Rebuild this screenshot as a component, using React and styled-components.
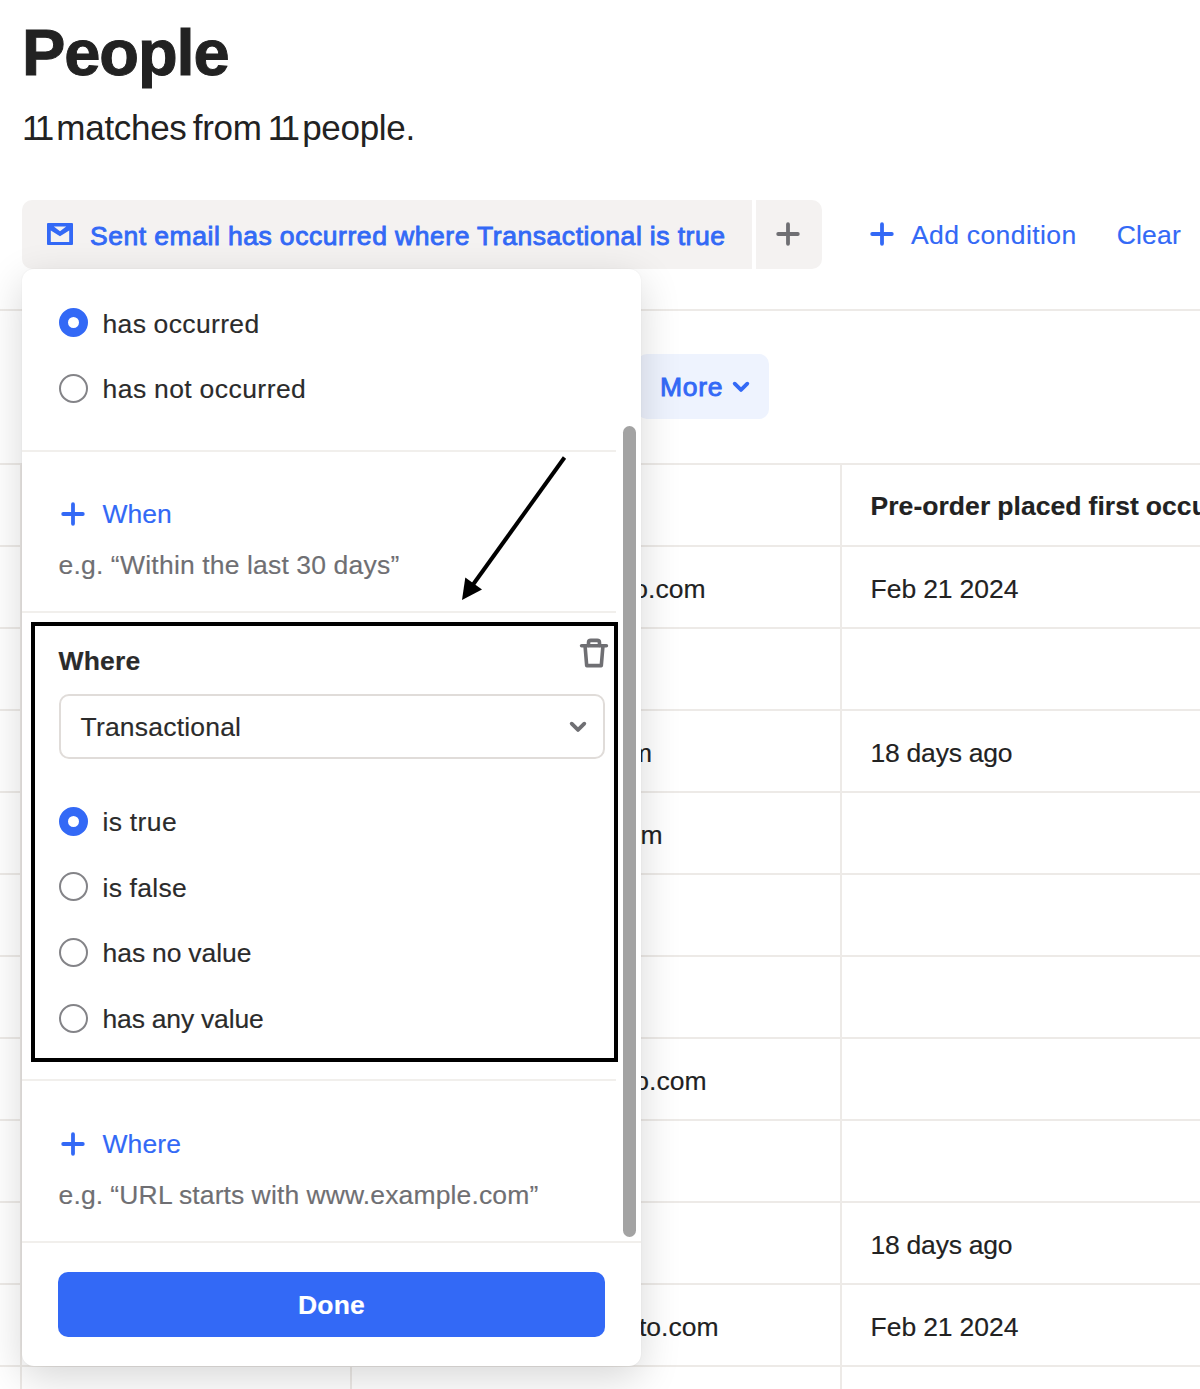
import React from 'react';
import styled, { createGlobalStyle } from 'styled-components';

const blue = '#3369f6';
const ink = '#222222';
const grey = '#6f6f73';
const line = '#edeae7';

const GlobalStyle = createGlobalStyle`
  *, *::before, *::after { box-sizing: border-box; }
  body {
    margin: 0;
    background: #fff;
    color: ${ink};
    font-family: "Liberation Sans", Arial, sans-serif;
    font-size: 26.5px;
    line-height: 30px;
  }
`;

const Page = styled.main`
  position: relative;
  width: 1200px;
  height: 1389px;
  overflow: hidden;
  display: flex;
  flex-direction: column;
`;

const Text = styled.span`
  display: block;
  white-space: nowrap;
  letter-spacing: ${(p) => p.$ls ?? 0.25}px;
  word-spacing: -0.4px;
  color: ${(p) => p.$color || 'inherit'};
  font-weight: ${(p) => (p.$bold ? 700 : 400)};
  -webkit-text-stroke: ${(p) => (p.$medium ? '0.9px currentColor' : '0.15px currentColor')};
  padding-top: ${(p) => p.$drop || 0}px;
`;

const Header = styled.header`
  height: 199px;
  padding: 16px 0 0 22px;
  flex: none;
`;

const Title = styled.h1`
  margin: 0;
  font-size: 65px;
  line-height: 74px;
  font-weight: 700;
  letter-spacing: -1.1px;
  -webkit-text-stroke: 1px currentColor;
`;

const Subtitle = styled.p`
  margin: 18px 0 0;
  font-size: 35px;
  line-height: 40px;
  letter-spacing: -0.3px;
  word-spacing: -3.2px;
  white-space: nowrap;
`;

const Count = styled.span`
  letter-spacing: -4.1px;
`;

const FilterBar = styled.section`
  flex: none;
  height: 112px;
  padding-left: 22px;
  display: flex;
  align-items: flex-start;
  border-bottom: 2px solid ${line};
`;

const Condition = styled.button`
  width: 730px;
  height: 69px;
  margin-top: 0.5px;
  padding: 0 0 0 25px;
  border: 0;
  border-radius: 10px 0 0 10px;
  background: #f4f2f1;
  font: inherit;
  color: ${blue};
  display: flex;
  align-items: center;
  gap: 17px;
`;

const AddGroup = styled.button`
  width: 66px;
  height: 69px;
  margin: 0.5px 0 0 4px;
  padding: 0 2px 0 0;
  border: 0;
  border-radius: 0 10px 10px 0;
  background: #f4f2f1;
  color: ${grey};
  display: flex;
  align-items: center;
  justify-content: center;
`;

const LinkButton = styled.button`
  height: 70px;
  margin-left: ${(p) => p.$left}px;
  padding: 0;
  border: 0;
  background: none;
  font: inherit;
  color: ${blue};
  display: flex;
  align-items: center;
  gap: 17px;
`;

const Toolbar = styled.section`
  flex: none;
  height: 152px;
  padding: 43px 0 0 637px;
`;

const MoreButton = styled.button`
  width: 132px;
  height: 65px;
  padding: 0 0 0 23px;
  border: 0;
  border-radius: 10px;
  background: #eef3fe;
  font: inherit;
  color: ${blue};
  display: flex;
  align-items: center;
  gap: 9px;
`;

const Table = styled.div`
  flex: none;
  border-top: 2px solid ${line};
`;

const Row = styled.div`
  height: 82px;
  display: grid;
  grid-template-columns: 22px 330px 490px 400px;
  border-bottom: 2px solid ${line};
`;

const Cell = styled.div`
  display: flex;
  align-items: center;
  overflow: hidden;
  border-right: 2px solid ${line};
  padding-left: 28.5px;
`;

const Gutter = styled(Cell)`
  padding: 0;
`;

const EmailCell = styled(Cell)`
  justify-content: flex-end;
  padding: 0 ${(p) => p.$end || 0}px 0 0;
`;

const Popover = styled.aside`
  position: absolute;
  left: 22px;
  top: 269px;
  width: 619px;
  height: 1097px;
  border-radius: 12px;
  background: #fff;
  color: #2b2b2b;
  box-shadow: 0 12px 40px rgba(0, 0, 0, 0.16), 0 0 2px rgba(0, 0, 0, 0.06);
  display: flex;
  flex-direction: column;
`;

const ScrollArea = styled.div`
  height: 972px;
  display: flex;
  justify-content: space-between;
`;

const ScrollContent = styled.div`
  width: 594px;
`;

const Scrollbar = styled.div`
  width: 13px;
  height: 811px;
  margin: 157px 5px 0 0;
  border-radius: 7px;
  background: #a3a3a3;
`;

const Section = styled.div`
  height: ${(p) => p.$h}px;
  padding: ${(p) => p.$top}px 0 0 36.5px;
  border-bottom: ${(p) => (p.$last ? '0' : '2px')} solid #f1efec;
`;

const RadioRow = styled.label`
  height: 65.6px;
  display: flex;
  align-items: center;
  gap: 15px;
`;

const Radio = styled.span`
  width: 29px;
  height: 29px;
  border-radius: 50%;
  background: #fff;
  border: ${(p) => (p.$on ? `9px solid ${blue}` : '2px solid #848488')};
`;

const AddRow = styled.div`
  height: 40px;
  padding-left: 2.5px;
  color: ${blue};
  display: flex;
  align-items: center;
  gap: 17.5px;
`;

const Hint = styled.div`
  margin-top: 16px;
  color: ${grey};
`;

const WhereHeader = styled.div`
  height: 57px;
  width: 550px;
  display: flex;
  justify-content: space-between;
`;

const Select = styled.div`
  width: 546px;
  height: 65px;
  padding: 0 16px 0 20px;
  border: 2px solid #e0dcd9;
  border-radius: 10px;
  display: flex;
  align-items: center;
  justify-content: space-between;
`;

const WhereRadios = styled.div`
  margin-top: 29.5px;
`;

const Footer = styled.div`
  height: 125px;
  padding: 29px 36px 0;
  border-top: 2px solid #f1efec;
`;

const DoneButton = styled.button`
  width: 547px;
  height: 65px;
  padding: 0;
  border: 0;
  border-radius: 10px;
  background: ${blue};
  color: #fff;
  font: inherit;
  display: flex;
  align-items: center;
  justify-content: center;
`;

const Highlight = styled.div`
  position: absolute;
  left: 31px;
  top: 622px;
  width: 587px;
  height: 440px;
  border: 4px solid #000;
`;

const ArrowSvg = styled.svg`
  position: absolute;
  left: 450px;
  top: 445px;
`;

const Plus = () => (
  <svg width="24" height="24" viewBox="0 0 24 24" fill="none" stroke="currentColor" strokeWidth="3.8" strokeLinecap="round">
    <path d="M12 2.2v19.6M2.2 12h19.6" />
  </svg>
);

const Chevron = ({ color = 'currentColor' }) => (
  <svg width="18" height="12" viewBox="0 0 18 12" fill="none" stroke={color} strokeWidth="3.8" strokeLinecap="round" strokeLinejoin="round">
    <path d="M2.7 2.7L9 8.9l6.3-6.2" />
  </svg>
);

const Envelope = () => (
  <svg width="26" height="22" viewBox="0 0 26 22" fill="currentColor" fillRule="evenodd">
    <path d="M1 0h24q1 0 1 1v20q0 1-1 1H1q-1 0-1-1V1q0-1 1-1ZM6.8 3.6L13 8.3l6.2-4.7ZM3.8 7.4V18.9H22.2V7.4L13 13.2Z" />
  </svg>
);

const Trash = () => (
  <svg width="30" height="31" viewBox="0 0 30 31" fill="none" stroke={grey} strokeWidth="3.6" strokeLinecap="round" strokeLinejoin="round">
    <path d="M2.6 8.8h24.8" />
    <path d="M9.5 8.5V5.7q0-2.3 2.3-2.3h6.4q2.3 0 2.3 2.3v2.8" />
    <path d="M6.1 9.3l1.6 19.3h14.6l1.6-19.3" />
  </svg>
);

const Option = ({ on, ls, drop = 2, children }) => (
  <RadioRow>
    <Radio $on={on} />
    <Text $ls={ls} $drop={drop}>{children}</Text>
  </RadioRow>
);

const rows = [
  { email: 'o.com', end: 134.5, date: 'Feb 21 2024', ls: 0 },
  {},
  { email: 'm', end: 188, date: '18 days ago', ls: -0.15 },
  { email: 'm', end: 177.5 },
  {},
  {},
  { email: 'o.com', end: 133.5 },
  {},
  { date: '18 days ago', ls: -0.15 },
  { email: 'to.com', end: 121.5, date: 'Feb 21 2024', ls: 0 },
  {},
];

export default function App() {
  return (
    <Page>
      <GlobalStyle />
      <Header>
        <Title>People</Title>
        <Subtitle><Count>11</Count> matches from <Count>11</Count> people.</Subtitle>
      </Header>
      <FilterBar>
        <Condition>
          <Envelope />
          <Text $medium $ls={0.56} $drop={4}>Sent email has occurred where Transactional is true</Text>
        </Condition>
        <AddGroup><Plus /></AddGroup>
        <LinkButton $left={48}>
          <Plus />
          <Text $ls={0.42} $drop={2}>Add condition</Text>
        </LinkButton>
        <LinkButton $left={40}>
          <Text $ls={0.2} $drop={2}>Clear</Text>
        </LinkButton>
      </FilterBar>
      <Toolbar>
        <MoreButton>
          <Text $medium $ls={0.7} $drop={1}>More</Text>
          <Chevron />
        </MoreButton>
      </Toolbar>
      <Table>
        <Row>
          <Gutter />
          <Cell />
          <Cell />
          <Cell><Text $bold $ls={0.05} $drop={1}>Pre-order placed first occu</Text></Cell>
        </Row>
        {rows.map((row, i) => (
          <Row key={i}>
            <Gutter />
            <Cell />
            <EmailCell $end={row.end}>{row.email && <Text $ls={0} $drop={3}>{row.email}</Text>}</EmailCell>
            <Cell>{row.date && <Text $ls={row.ls} $drop={3}>{row.date}</Text>}</Cell>
          </Row>
        ))}
      </Table>

      <Popover>
        <ScrollArea>
          <ScrollContent>
            <Section $h={183} $top={21}>
              <Option on ls={0.35}>has occurred</Option>
              <Option ls={0.45}>has not occurred</Option>
            </Section>
            <Section $h={161} $top={42}>
              <AddRow><Plus /><Text $ls={0}>When</Text></AddRow>
              <Hint><Text $ls={0.24}>e.g. “Within the last 30 days”</Text></Hint>
            </Section>
            <Section $h={468} $top={24}>
              <WhereHeader>
                <Text $bold $ls={0.2} $drop={9}>Where</Text>
                <Trash />
              </WhereHeader>
              <Select>
                <Text $ls={0.2}>Transactional</Text>
                <Chevron color={grey} />
              </Select>
              <WhereRadios>
                <Option on ls={0.4}>is true</Option>
                <Option ls={0.3}>is false</Option>
                <Option ls={-0.05}>has no value</Option>
                <Option ls={-0.12}>has any value</Option>
              </WhereRadios>
            </Section>
            <Section $h={160} $top={43} $last>
              <AddRow><Plus /><Text $ls={0.1}>Where</Text></AddRow>
              <Hint><Text $ls={0.14}>e.g. “URL starts with www.example.com”</Text></Hint>
            </Section>
          </ScrollContent>
          <Scrollbar />
        </ScrollArea>
        <Footer>
          <DoneButton><Text $bold $ls={0.2} $drop={1}>Done</Text></DoneButton>
        </Footer>
      </Popover>

      <Highlight />
      <ArrowSvg width="130" height="165" viewBox="0 0 130 165">
        <path d="M114.5 12.5L22 141" stroke="#000" strokeWidth="4" fill="none" />
        <path d="M12 155L15.3 132.5L32 144.5Z" fill="#000" />
      </ArrowSvg>
    </Page>
  );
}
